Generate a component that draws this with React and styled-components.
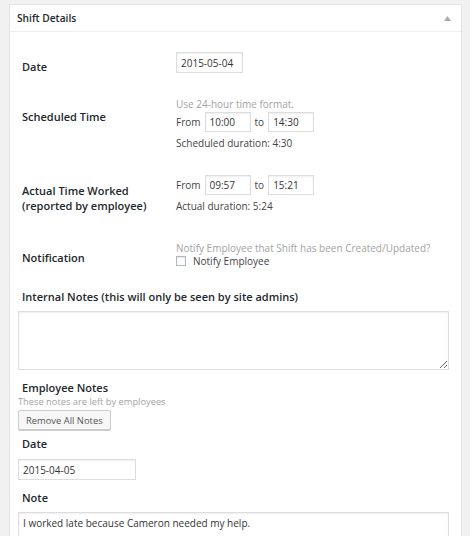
import React from "react";
import styled, { createGlobalStyle } from "styled-components";

const Global = createGlobalStyle`
  html, body { margin: 0; padding: 0; background: #f1f1f1; }
  body {
    font-family: "Open Sans", "Liberation Sans", sans-serif;
    font-size: 10px;
    color: #444;
  }
  * { box-sizing: border-box; }
`;

const Postbox = styled.div`
  margin: 4px 8px 0 9px;
  background: #fff;
  border: 1px solid #e5e5e5;
  box-shadow: 0 1px 1px rgba(0, 0, 0, 0.04);
`;

const Header = styled.div`
  height: 27px;
  display: flex;
  align-items: center;
  justify-content: space-between;
  padding: 0 10px 0 7px;
  border-bottom: 1px solid #eee;
`;

const Title = styled.h2`
  margin: 0;
  font-size: 10.2px;
  font-weight: 600;
  color: #23282d;
`;

const Toggle = styled.svg`
  width: 7px;
  height: 5px;
  fill: #aaa;
`;

const Inside = styled.div`
  padding: 0 12px 0 8px;
`;

const FormTable = styled.div`
  padding-left: 4px;
`;

const Row = styled.div`
  display: grid;
  grid-template-columns: 154px 1fr;
  align-items: start;
  padding-top: ${(p) => p.$top}px;
`;

const Label = styled.div`
  padding-top: ${(p) => p.$offset}px;
  font-size: 11px;
  font-weight: 600;
  line-height: 15px;
  color: #23282d;
`;

const Cell = styled.div`
  display: flex;
  flex-direction: column;
  align-items: flex-start;
`;

const Description = styled.div`
  color: #a3a3a3;
  line-height: ${(p) => p.$lh || 16}px;
  font-size: ${(p) => (p.$small ? 9.3 : 10)}px;
`;

const Text = styled.div`
  line-height: 16px;
  margin-top: ${(p) => p.$gap || 0}px;
`;

const TimeLine = styled.div`
  display: flex;
  align-items: center;
  gap: 4px;
`;

const Field = styled.input`
  height: ${(p) => p.$h || 20}px;
  width: ${(p) => p.$w}px;
  border: 1px solid #ddd;
  box-shadow: inset 0 1px 2px rgba(0, 0, 0, 0.07);
  background: #fff;
  padding: 0 4px;
  font-family: inherit;
  font-size: 10px;
  color: #333;
  outline: none;
  margin: 0;
`;

const CheckLine = styled.label`
  display: flex;
  align-items: center;
  gap: 7px;
  height: 12px;
  line-height: 12px;
`;

const Check = styled.input`
  appearance: none;
  margin: 0;
  width: 10px;
  height: 10px;
  border: 1px solid #b4b9be;
  background: #fff;
  box-shadow: inset 0 1px 2px rgba(0, 0, 0, 0.1);
`;

const Section = styled.div`
  padding-left: ${(p) => p.$indent || 0}px;
  margin-top: ${(p) => p.$top || 0}px;
`;

const SectionLabel = styled.div`
  font-size: 11px;
  font-weight: 600;
  line-height: 15px;
  color: #23282d;
`;

const Area = styled.textarea`
  display: block;
  width: 100%;
  height: ${(p) => p.$h}px;
  border: 1px solid #ddd;
  box-shadow: inset 0 1px 2px rgba(0, 0, 0, 0.07);
  padding: 3px 4px;
  font-family: inherit;
  font-size: 10px;
  color: #333;
  resize: vertical;
  outline: none;
  margin: 0;
`;

const Button = styled.button`
  display: block;
  margin-top: ${(p) => p.$top || 0}px;
  height: 20px;
  padding: 0 7px;
  border: 1px solid #ccc;
  border-radius: 2px;
  background: #f7f7f7;
  box-shadow: 0 1px 0 #ccc;
  font-family: inherit;
  font-size: 9.4px;
  color: #555;
  cursor: pointer;
`;

export default function App() {
  return (
    <>
      <Global />
      <Postbox>
        <Header>
          <Title>Shift Details</Title>
          <Toggle viewBox="0 0 7 5">
            <polygon points="3.5,0 7,5 0,5" />
          </Toggle>
        </Header>
        <Inside>
          <FormTable>
            <Row $top={20}>
              <Label $offset={7}>Date</Label>
              <Cell>
                <Field $w={67} $h={21} defaultValue="2015-05-04" />
              </Cell>
            </Row>
            <Row $top={22}>
              <Label $offset={13}>Scheduled Time</Label>
              <Cell>
                <Description>Use 24-hour time format.</Description>
                <TimeLine>
                  From <Field $w={46} defaultValue="10:00" /> to{" "}
                  <Field $w={46} defaultValue="14:30" />
                </TimeLine>
                <Text $gap={3}>Scheduled duration: 4:30</Text>
              </Cell>
            </Row>
            <Row $top={24}>
              <Label $offset={8}>
                Actual Time Worked
                <br />
                (reported by employee)
              </Label>
              <Cell>
                <TimeLine>
                  From <Field $w={46} defaultValue="09:57" /> to{" "}
                  <Field $w={46} defaultValue="15:21" />
                </TimeLine>
                <Text $gap={3}>Actual duration: 5:24</Text>
              </Cell>
            </Row>
            <Row $top={27}>
              <Label $offset={9}>Notification</Label>
              <Cell>
                <Description $lh={14}>
                  Notify Employee that Shift has been Created/Updated?
                </Description>
                <CheckLine>
                  <Check type="checkbox" />
                  Notify Employee
                </CheckLine>
              </Cell>
            </Row>
          </FormTable>

          <Section $indent={4} $top={22}>
            <SectionLabel>Internal Notes (this will only be seen by site admins)</SectionLabel>
          </Section>
          <Section $top={7}>
            <Area $h={59} />
          </Section>

          <Section $indent={4} $top={10}>
            <SectionLabel>Employee Notes</SectionLabel>
          </Section>
          <Section>
            <Description $small $lh={14}>These notes are left by employees</Description>
            <Button $top={1}>Remove All Notes</Button>
          </Section>
          <Section $indent={4} $top={6}>
            <SectionLabel>Date</SectionLabel>
          </Section>
          <Section $top={8}>
            <Field $w={118} $h={21} defaultValue="2015-04-05" />
          </Section>
          <Section $indent={4} $top={10}>
            <SectionLabel>Note</SectionLabel>
          </Section>
          <Section $top={7}>
            <Area $h={59} defaultValue="I worked late because Cameron needed my help." />
          </Section>
        </Inside>
      </Postbox>
    </>
  );
}
